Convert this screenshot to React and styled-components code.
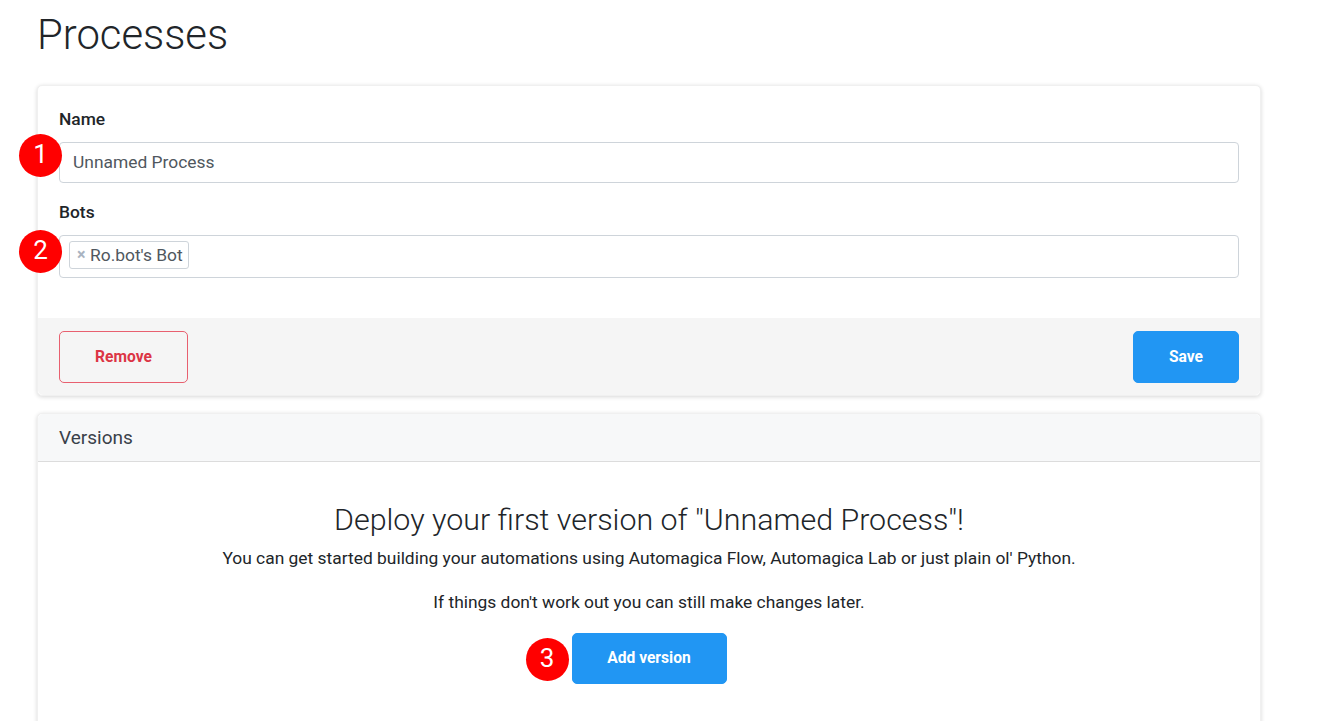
import React from "react";
import styled, { createGlobalStyle } from "styled-components";

const GlobalStyle = createGlobalStyle`
    html, body {
        margin: 0;
        height: 721px;
        overflow: hidden;
        background-color: #fff;
        font-family: Roboto, "Liberation Sans", sans-serif;
        color: #212529;
    }
`;

const Page = styled.div`
    width: 1224px;
    padding: 10px 0 0 37px;
`;

const Title = styled.h1`
    margin: 0 0 26px;
    font-size: 41.8px;
    line-height: 49px;
    font-weight: 300;
    color: #212529;
`;

const Card = styled.section`
    box-sizing: border-box;
    border: 1px solid #f0f0f0;
    border-radius: 5px;
    background-color: #fff;
    box-shadow: 0 1px 4px rgba(0, 0, 0, 0.16);
    margin-bottom: 17px;
`;

const CardBody = styled.div`
    padding: 22px 21px 40px;
`;

const Field = styled.div`
    position: relative;
    margin-bottom: 18px;

    &:last-child {
        margin-bottom: 0;
    }
`;

const Label = styled.label`
    display: block;
    font-size: 17.4px;
    line-height: 22px;
    font-weight: 500;
    margin-bottom: 12px;
`;

const TextInput = styled.div`
    box-sizing: border-box;
    height: 41px;
    padding: 0 13px 2px;
    border: 1px solid #ced4da;
    border-radius: 4px;
    display: flex;
    align-items: center;
    font-size: 17.4px;
    color: #50575e;
`;

const TagInput = styled(TextInput)`
    height: 43px;
    padding: 0 9px 3px;
`;

const Tag = styled.span`
    display: inline-flex;
    align-items: center;
    box-sizing: border-box;
    height: 28px;
    padding: 0 5px 1px 7px;
    border: 1px solid #ced4da;
    border-radius: 3px;
    font-size: 17.4px;
    color: #50575e;
`;

const TagRemove = styled.span`
    color: #a9b3c1;
    font-size: 16px;
    font-weight: 700;
    margin-right: 4.5px;
`;

const Badge = styled.span`
    position: absolute;
    left: ${(props) => props.$left}px;
    top: ${(props) => props.$top}px;
    box-sizing: border-box;
    width: 43px;
    height: 43px;
    padding-bottom: 4px;
    border-radius: 50%;
    background-color: #ff0000;
    color: #fff;
    font-size: 26px;
    display: flex;
    align-items: center;
    justify-content: center;
`;

const CardFooter = styled.div`
    display: flex;
    justify-content: space-between;
    padding: 13px 21px 12px;
    background-color: #f5f5f5;
    border-radius: 0 0 5px 5px;
`;

const Button = styled.button`
    box-sizing: border-box;
    width: ${(props) => props.$width}px;
    height: ${(props) => props.$height}px;
    border-radius: 5px;
    border: 1px solid ${(props) => (props.$danger ? "#e8606f" : "#2196f3")};
    background-color: ${(props) => (props.$danger ? "transparent" : "#2196f3")};
    color: ${(props) => (props.$danger ? "#dc3545" : "#fff")};
    font-family: inherit;
    font-size: 15.6px;
    font-weight: 700;
`;

const AddButton = styled(Button)`
    padding-bottom: 3px;
`;

const CardHeader = styled.div`
    box-sizing: border-box;
    height: 48px;
    padding: 0 21px;
    display: flex;
    align-items: center;
    font-size: 19px;
    color: #3a4149;
    background-color: #f7f8f9;
    border-bottom: 1px solid #dcdcdc;
    border-radius: 5px 5px 0 0;
`;

const Empty = styled.div`
    padding: 39px 21px 50px;
    text-align: center;
`;

const EmptyTitle = styled.h2`
    margin: 0 0 7px;
    font-size: 30.4px;
    line-height: 38px;
    font-weight: 300;
`;

const EmptyText = styled.p`
    margin: 0 0 20px;
    font-size: 17.4px;
    line-height: 24px;

    &:last-of-type {
        margin-bottom: 19px;
    }
`;

const AddRow = styled.div`
    position: relative;
    display: inline-block;
`;

export default function App() {
    return (
        <Page>
            <GlobalStyle />
            <Title>Processes</Title>
            <Card>
                <CardBody>
                    <Field>
                        <Label>Name</Label>
                        <Badge $left={-40} $top={26}>1</Badge>
                        <TextInput>Unnamed Process</TextInput>
                    </Field>
                    <Field>
                        <Label>Bots</Label>
                        <Badge $left={-40} $top={29}>2</Badge>
                        <TagInput>
                            <Tag>
                                <TagRemove>×</TagRemove>
                                Ro.bot's Bot
                            </Tag>
                        </TagInput>
                    </Field>
                </CardBody>
                <CardFooter>
                    <Button $danger $width={129} $height={52}>Remove</Button>
                    <Button $width={106} $height={52}>Save</Button>
                </CardFooter>
            </Card>
            <Card>
                <CardHeader>Versions</CardHeader>
                <Empty>
                    <EmptyTitle>Deploy your first version of "Unnamed Process"!</EmptyTitle>
                    <EmptyText>You can get started building your automations using Automagica Flow, Automagica Lab or just plain ol' Python.</EmptyText>
                    <EmptyText>If things don't work out you can still make changes later.</EmptyText>
                    <AddRow>
                        <Badge $left={-46} $top={5}>3</Badge>
                        <AddButton $width={155} $height={51}>Add version</AddButton>
                    </AddRow>
                </Empty>
            </Card>
        </Page>
    );
}
